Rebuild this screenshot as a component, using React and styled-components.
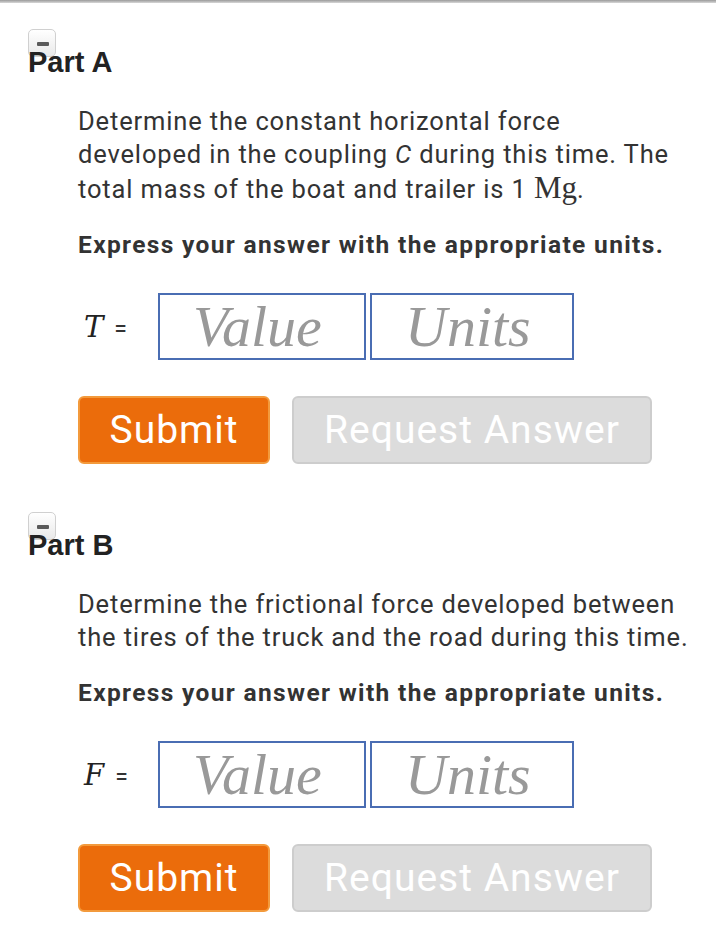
import React from "react";
import styled, { createGlobalStyle } from "styled-components";

const GlobalStyle = createGlobalStyle`
  body {
    margin: 0;
    background: #ffffff;
    font-family: Roboto, "Liberation Sans", sans-serif;
    color: #333333;
  }
`;

const Page = styled.div`
  width: 720px;
  min-height: 936px;
  box-sizing: border-box;
`;

const TopRule = styled.div`
  width: 716px;
  height: 3px;
  background: linear-gradient(#9a9a9a, #d8d8d8);
`;

const Part = styled.section`
  padding: 0 0 0 28px;
  margin-top: ${(p) => p.$top}px;
`;

const Heading = styled.h2`
  position: relative;
  margin: 0;
  height: 46px;
  padding-top: 17px;
  box-sizing: border-box;
  font-family: "Liberation Sans", Arial, sans-serif;
  font-weight: 700;
  font-size: 29px;
  line-height: 32px;
  color: #222222;
`;

const Toggle = styled.span`
  position: absolute;
  left: 0;
  top: 0;
  width: 28px;
  height: 28px;
  box-sizing: border-box;
  border: 1px solid #d0d0d0;
  border-radius: 5px;
  background: linear-gradient(#ffffff, #e9e9e9);
  &::after {
    content: "";
    position: absolute;
    left: 8px;
    top: 12px;
    width: 12px;
    height: 4px;
    border-radius: 1px;
    background: #5a5a5a;
  }
`;

const HeadingText = styled.span`
  position: relative;
`;

const Body = styled.div`
  padding-left: 50px;
  width: 630px;
  box-sizing: border-box;
`;

const Prompt = styled.p`
  margin: 30px 0 0;
  font-size: 25.5px;
  letter-spacing: 0.85px;
  line-height: 33px;
  color: #333333;
  white-space: nowrap;
`;

const Mg = styled.span`
  font-family: "Liberation Serif", serif;
  font-size: 31px;
  letter-spacing: 0;
`;

const Instr = styled.p`
  margin: 22px 0 0;
  font-size: 24.5px;
  font-weight: 700;
  letter-spacing: 1.35px;
  line-height: 33px;
  color: #333333;
  white-space: nowrap;
`;

const AnswerRow = styled.div`
  display: flex;
  align-items: center;
  margin-top: 32px;
`;

const Label = styled.div`
  width: 80px;
  padding-left: 6px;
  box-sizing: border-box;
  display: flex;
  align-items: baseline;
  gap: 11px;
`;

const Sym = styled.span`
  font-family: "DejaVu Serif", serif;
  font-style: italic;
  font-size: 29px;
  color: #222222;
`;

const Eq = styled.span`
  font-size: 23px;
  color: #333333;
`;

const Field = styled.div`
  width: ${(p) => p.$w}px;
  height: 67px;
  box-sizing: border-box;
  border: 2px solid #4a6db3;
  margin-right: 4px;
  padding-left: 33px;
  display: flex;
  align-items: center;
  font-family: "Liberation Serif", serif;
  font-style: italic;
  font-size: 58px;
  color: #999999;
`;

const Buttons = styled.div`
  display: flex;
  gap: 22px;
  margin-top: 36px;
`;

const Button = styled.button`
  height: 68px;
  width: ${(p) => p.$w}px;
  box-sizing: border-box;
  border-radius: 6px;
  border: 2px solid ${(p) => (p.$primary ? "#f39a3c" : "#cdcdcd")};
  background: ${(p) => (p.$primary ? "#eb6c0b" : "#dcdcdc")};
  color: #ffffff;
  font-family: Roboto, "Liberation Sans", sans-serif;
  font-size: 39px;
  letter-spacing: 1px;
  padding: 0;
`;

const Var = styled.i`
  font-style: italic;
`;

const PartBlock = ({ top, title, children, sym }) => (
  <Part $top={top}>
    <Heading>
      <Toggle />
      <HeadingText>{title}</HeadingText>
    </Heading>
    <Body>
      <Prompt>{children}</Prompt>
      <Instr>Express your answer with the appropriate units.</Instr>
      <AnswerRow>
        <Label>
          <Sym>{sym}</Sym>
          <Eq>=</Eq>
        </Label>
        <Field $w={208}>Value</Field>
        <Field $w={204}>Units</Field>
      </AnswerRow>
      <Buttons>
        <Button $primary $w={192}>
          Submit
        </Button>
        <Button $w={360}>Request Answer</Button>
      </Buttons>
    </Body>
  </Part>
);

export default function App() {
  return (
    <Page>
      <GlobalStyle />
      <TopRule />
      <PartBlock top={26} title="Part A" sym="T">
        Determine the constant horizontal force
        <br />
        developed in the coupling <Var>C</Var> during this time. The
        <br />
        total mass of the boat and trailer is 1 <Mg>Mg</Mg>.
      </PartBlock>
      <PartBlock top={48} title="Part B" sym="F">
        Determine the frictional force developed between
        <br />
        the tires of the truck and the road during this time.
      </PartBlock>
    </Page>
  );
}
